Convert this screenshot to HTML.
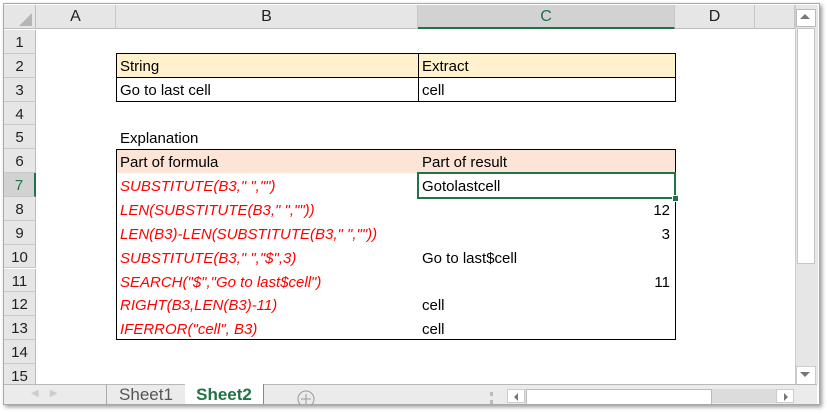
<!DOCTYPE html><html><head><style>
body{margin:0;width:827px;height:413px;background:#fff;overflow:hidden;position:relative;font-family:"Liberation Sans",sans-serif}
.a{position:absolute}
.win{left:3px;top:3px;width:815px;height:400px;border:1px solid #a8a8a8;box-shadow:2px 2px 4px #999;background:#fff}
.ch{top:5px;height:24px;background:#e6e6e6;border-right:1px solid #c8c8c8;border-bottom:1px solid #bdbdbd;font-size:16px;color:#222;text-align:center;line-height:24px;box-sizing:border-box}
.rh{left:4px;width:32px;background:#e6e6e6;border-bottom:1px solid #c8c8c8;border-right:1px solid #bdbdbd;font-size:15px;color:#222;text-align:center;box-sizing:border-box}
.t{font-size:15px;color:#000;white-space:nowrap}
.r{color:#f00;font-style:italic}
</style></head><body>
<div class="a win"></div>
<div class="a" style="left:4px;top:5px;width:32px;height:24px;background:#e6e6e6;border-right:1px solid #bdbdbd;border-bottom:1px solid #bdbdbd;box-sizing:border-box"></div>
<svg class="a" style="left:18px;top:12px" width="16" height="16"><polygon points="14,1 14,14 1,14" fill="#b5b5b5"/></svg>
<div class="a ch" style="left:36px;width:80px">A</div>
<div class="a ch" style="left:116px;width:302px">B</div>
<div class="a ch" style="left:418px;width:257px;background:#d2d2d2;color:#217346;border-bottom:2px solid #217346">C</div>
<div class="a ch" style="left:675px;width:80px">D</div>
<div class="a ch" style="left:755px;width:40px"></div>
<div id="rows"></div>
<script>
var h='';for(var k=1;k<=15;k++){var t=30+(k-1)*23.85;h+='<div class="a rh" style="top:'+t+'px;height:23.85px;line-height:25px;'+(k==7?'background:#d2d2d2;color:#217346;border-right:2px solid #217346':'')+'">'+k+'</div>';}
document.getElementById('rows').innerHTML=h;
</script>
<div class="a" style="left:116px;top:53px;width:559px;height:24px;background:#fff2cc"></div>
<div class="a" style="left:116px;top:53px;width:558px;height:47px;border:1px solid #000"></div>
<div class="a" style="left:116px;top:77px;width:559px;height:1px;background:#000"></div>
<div class="a" style="left:418px;top:53px;width:1px;height:48px;background:#000"></div>
<div class="a t" style="left:120px;top:58px">String</div>
<div class="a t" style="left:422px;top:58px">Extract</div>
<div class="a t" style="left:120px;top:82px">Go to last cell</div>
<div class="a t" style="left:422px;top:82px">cell</div>
<div class="a t" style="left:120px;top:130px">Explanation</div>
<div class="a" style="left:116px;top:149px;width:559px;height:24px;background:#fce4d6"></div>
<div class="a" style="left:116px;top:149px;width:558px;height:189px;border:1px solid #000"></div>
<div class="a" style="left:417px;top:172px;width:255px;height:23px;border:2px solid #217346"></div>
<div class="a" style="left:672px;top:195px;width:5px;height:5px;background:#217346;border:1px solid #fff"></div>
<div class="a t" style="left:120px;top:154px">Part of formula</div>
<div class="a t" style="left:422px;top:154px">Part of result</div>
<div class="a t r" style="left:120px;top:178px">SUBSTITUTE(B3," ","")</div>
<div class="a t" style="left:422px;top:178px">Gotolastcell</div>
<div class="a t r" style="left:120px;top:202px">LEN(SUBSTITUTE(B3," ",""))</div>
<div class="a t" style="right:157px;top:202px">12</div>
<div class="a t r" style="left:120px;top:226px">LEN(B3)-LEN(SUBSTITUTE(B3," ",""))</div>
<div class="a t" style="right:157px;top:226px">3</div>
<div class="a t r" style="left:120px;top:250px">SUBSTITUTE(B3," ","$",3)</div>
<div class="a t" style="left:422px;top:250px">Go to last$cell</div>
<div class="a t r" style="left:120px;top:274px">SEARCH("$","Go to last$cell")</div>
<div class="a t" style="right:157px;top:274px">11</div>
<div class="a t r" style="left:120px;top:297px">RIGHT(B3,LEN(B3)-11)</div>
<div class="a t" style="left:422px;top:297px">cell</div>
<div class="a t r" style="left:120px;top:321px">IFERROR("cell", B3)</div>
<div class="a t" style="left:422px;top:321px">cell</div>
<div class="a" style="left:795px;top:5px;width:22px;height:379px;background:#e6e6e6;border-left:1px solid #ccc"></div>
<div class="a" style="left:796px;top:9px;width:18px;height:16px;background:#fff;border:1px solid #bbb"></div>
<svg class="a" style="left:799px;top:13px" width="12" height="8"><polygon points="1,6 6,1 11,6" fill="#777"/></svg>
<div class="a" style="left:797px;top:28px;width:16px;height:234px;background:#fff;border:1px solid #c6c6c6"></div>
<div class="a" style="left:796px;top:366px;width:18px;height:17px;background:#fff;border:1px solid #ccc;border-bottom:none"></div>
<svg class="a" style="left:799px;top:371px" width="12" height="8"><polygon points="1,1 6,6 11,1" fill="#777"/></svg>
<div class="a" style="left:4px;top:384px;width:813px;height:19px;background:#ebebeb;border-top:1px solid #b8b8b8"></div>
<div class="a" style="left:31px;top:388px;font-size:10px;color:#ccc">&#9664;&nbsp;&nbsp;&nbsp;&nbsp;&#9654;</div>
<div class="a" style="left:106px;top:385px;width:78px;height:19px;border-left:1px solid #aaa;border-right:1px solid #aaa;font-size:17px;color:#555;text-align:center;line-height:20px">Sheet1</div>
<div class="a" style="left:185px;top:384px;width:78px;height:20px;background:#fff;border-right:1px solid #888;font-size:17px;color:#217346;font-weight:bold;text-align:center;line-height:21px">Sheet2</div>
<svg class="a" style="left:297px;top:389px" width="18" height="16"><circle cx="9" cy="10" r="8" fill="none" stroke="#999"/><path d="M9 5v10M4 10h10" stroke="#999"/></svg>
<div class="a" style="left:490px;top:392px;width:2px;height:12px;border-left:3px dotted #bbb"></div>
<div class="a" style="left:507px;top:389px;width:287px;height:14px;background:#dcdcdc"></div>
<div class="a" style="left:507px;top:389px;width:18px;height:14px;background:#fff;border:1px solid #ccc;box-sizing:border-box"></div>
<svg class="a" style="left:512px;top:392px" width="8" height="10"><polygon points="6,1 2,5 6,9" fill="#777"/></svg>
<div class="a" style="left:526px;top:389px;width:184px;height:14px;background:#fff;border:1px solid #bbb;border-bottom:none"></div>
<div class="a" style="left:776px;top:389px;width:18px;height:14px;background:#fff;border:1px solid #ccc;box-sizing:border-box"></div>
<svg class="a" style="left:782px;top:392px" width="8" height="10"><polygon points="2,1 6,5 2,9" fill="#777"/></svg>
</body></html>
